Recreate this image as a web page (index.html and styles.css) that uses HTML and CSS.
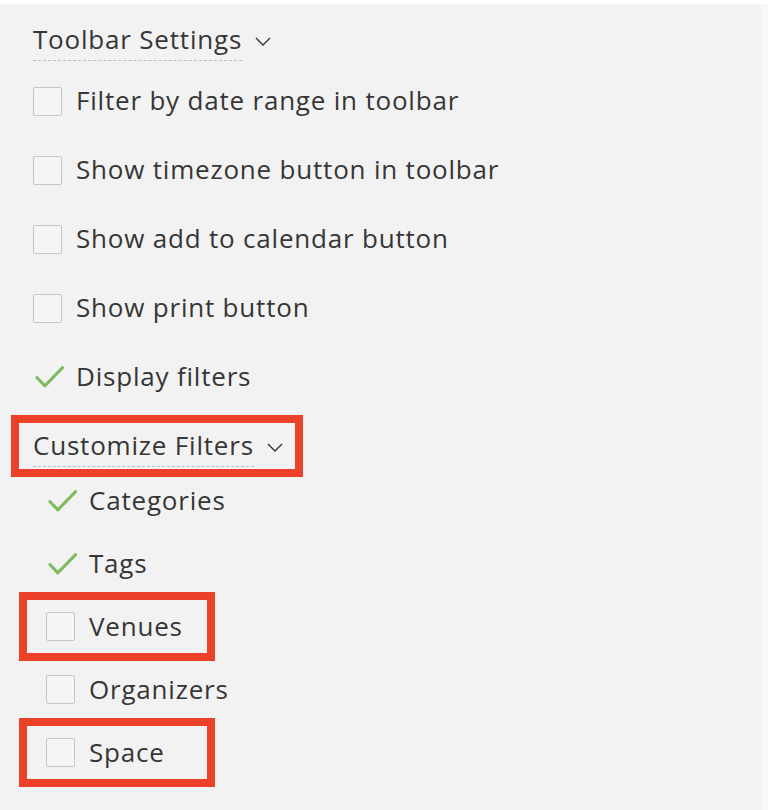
FILE: index.html
```html
<!DOCTYPE html>
<html lang="en">
<head>
<meta charset="utf-8">
<title>Toolbar Settings</title>
<link rel="stylesheet" href="styles.css">
</head>
<body>
<div class="page">
  <div class="panel">
    <div class="title-row">
      <span class="title">Toolbar Settings</span>
      <svg class="chev" viewBox="0 0 16 9" width="16" height="9"><path d="M1 1l7 7 7-7" fill="none" stroke="#333" stroke-width="1.4"/></svg>
    </div>
    <div class="row"><span class="box"></span><span class="label">Filter by date range in toolbar</span></div>
    <div class="row"><span class="box"></span><span class="label">Show timezone button in toolbar</span></div>
    <div class="row"><span class="box"></span><span class="label">Show add to calendar button</span></div>
    <div class="row"><span class="box"></span><span class="label">Show print button</span></div>
    <div class="row"><span class="tick"><svg viewBox="0 0 31 24" width="31" height="24"><path d="M2 12.5l8.5 9L29.5 2" fill="none" stroke="#7dbb5f" stroke-width="3.2" stroke-linecap="round" stroke-linejoin="round"/></svg></span><span class="label">Display filters</span></div>
    <div class="title-row sub-title hl">
      <span class="title">Customize Filters</span>
      <svg class="chev" viewBox="0 0 16 9" width="16" height="9"><path d="M1 1l7 7 7-7" fill="none" stroke="#333" stroke-width="1.4"/></svg>
    </div>
    <div class="subrow"><span class="tick"><svg viewBox="0 0 31 24" width="31" height="24"><path d="M2 12.5l8.5 9L29.5 2" fill="none" stroke="#7dbb5f" stroke-width="3.2" stroke-linecap="round" stroke-linejoin="round"/></svg></span><span class="label">Categories</span></div>
    <div class="subrow"><span class="tick"><svg viewBox="0 0 31 24" width="31" height="24"><path d="M2 12.5l8.5 9L29.5 2" fill="none" stroke="#7dbb5f" stroke-width="3.2" stroke-linecap="round" stroke-linejoin="round"/></svg></span><span class="label">Tags</span></div>
    <div class="subrow hl-item"><span class="box"></span><span class="label">Venues</span></div>
    <div class="subrow"><span class="box"></span><span class="label">Organizers</span></div>
    <div class="subrow hl-item"><span class="box"></span><span class="label">Space</span></div>
  </div>
  <div class="scroll"></div>
</div>
</body>
</html>
```

FILE: styles.css
```css
html, body {
  margin: 0;
  padding: 0;
  background: #ffffff;
}
body {
  font-family: "Open Sans", "Liberation Sans", sans-serif;
  color: #363636;
}
.page {
  display: flex;
  margin-top: 4px;
  height: 806px;
}
.panel {
  flex: 1;
  background: #f2f2f2;
  padding-top: 13px;
  box-sizing: border-box;
}
.scroll {
  width: 7px;
  background: #f7f7f7;
}
.title-row {
  display: flex;
  align-items: center;
  height: 46px;
  padding-left: 33px;
  margin-bottom: 3.5px;
}
.title {
  font-size: 26px;
  letter-spacing: 0.8px;
  line-height: 30px;
  padding-bottom: 6px;
  margin-top: 5px;
  border-bottom: 1px dashed #bdbdbd;
}
.chev {
  margin-left: 13px;
  margin-top: 2px;
}
.row {
  display: flex;
  align-items: center;
  height: 69px;
  padding-left: 33px;
}
.box {
  width: 29px;
  height: 29px;
  box-sizing: border-box;
  border: 1.5px solid #c6c6c6;
  border-radius: 2px;
  background: #f5f5f5;
  flex: none;
}
.tick {
  width: 29px;
  flex: none;
  display: flex;
  justify-content: flex-start;
  padding-left: 2px;
  margin-right: -2px;
}
.label {
  font-size: 26px;
  letter-spacing: 0.8px;
  margin-left: 14px;
  line-height: 30px;
  padding-bottom: 2px;
}
.sub-title {
  margin-top: 11.5px;
  margin-bottom: 0;
  margin-left: 18.5px;
  padding-left: 14.5px;
  width: 276px;
  box-sizing: border-box;
}
.hl {
  outline: 8px solid #ea4128;
}
.subrow {
  display: flex;
  align-items: center;
  height: 63px;
  margin-left: 21.5px;
  padding-left: 24.5px;
  width: 190px;
  box-sizing: border-box;
}
.hl-item {
  outline: 8px solid #ea4128;
  outline-offset: -5.5px;
}
```
